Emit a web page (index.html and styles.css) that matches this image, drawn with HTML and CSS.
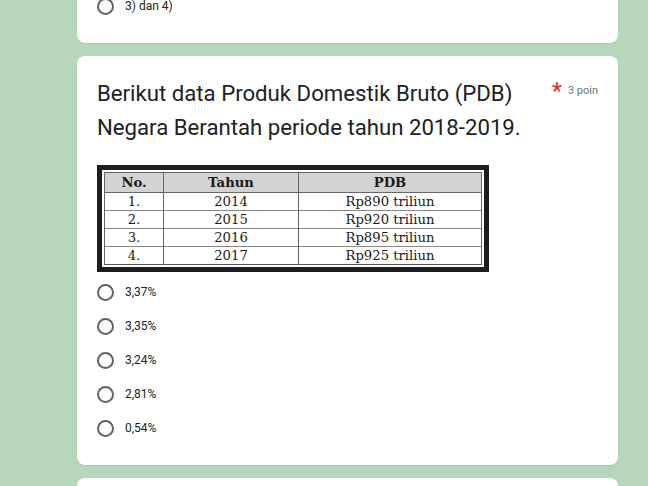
FILE: index.html
```html
<!DOCTYPE html>
<html lang="id">
<head>
<meta charset="utf-8">
<title>Form</title>
<link rel="stylesheet" href="styles.css">
</head>
<body>
<main class="form">
  <section class="card">
    <div class="option"><span class="radio"></span><span class="label">3) dan 4)</span></div>
  </section>
  <section class="card">
    <div class="q-head">
      <h2 class="q-title">Berikut data Produk Domestik Bruto (PDB) Negara Berantah periode tahun 2018-2019.</h2>
      <div class="points"><span class="req">*</span><span class="poin">3 poin</span></div>
    </div>
    <div class="figure">
      <table class="data">
        <thead>
          <tr><th class="c1">No.</th><th class="c2">Tahun</th><th class="c3">PDB</th></tr>
        </thead>
        <tbody>
          <tr><td>1.</td><td>2014</td><td>Rp890 triliun</td></tr>
          <tr><td>2.</td><td>2015</td><td>Rp920 triliun</td></tr>
          <tr><td>3.</td><td>2016</td><td>Rp895 triliun</td></tr>
          <tr><td>4.</td><td>2017</td><td>Rp925 triliun</td></tr>
        </tbody>
      </table>
    </div>
    <div class="options">
      <div class="option"><span class="radio"></span><span class="label">3,37%</span></div>
      <div class="option"><span class="radio"></span><span class="label">3,35%</span></div>
      <div class="option"><span class="radio"></span><span class="label">3,24%</span></div>
      <div class="option"><span class="radio"></span><span class="label">2,81%</span></div>
      <div class="option"><span class="radio"></span><span class="label">0,54%</span></div>
    </div>
  </section>
  <section class="card card-next"></section>
</main>
</body>
</html>
```

FILE: styles.css
```css
html, body {
  margin: 0;
  padding: 0;
  background: #b6d7bb;
  font-family: Roboto, "Noto Sans", Arial, sans-serif;
  color: #202124;
  overflow: hidden;
}

.form {
  width: 541px;
  margin: -31px 0 0 77px;
  display: flex;
  flex-direction: column;
  gap: 13px;
}

.card {
  background: #fff;
  border-radius: 8px;
  padding: 20px;
  box-shadow: 0 1px 1px rgba(0,0,0,0.08);
}

.card-next {
  height: 60px;
}

.q-head {
  display: flex;
  align-items: flex-start;
  justify-content: space-between;
}

.q-title {
  margin: 0;
  font-weight: 400;
  font-size: 22.2px;
  line-height: 34px;
  width: 445px;
}

.points {
  display: flex;
  align-items: center;
  gap: 6px;
  padding-top: 6px;
}

.req {
  color: #d93025;
  font-size: 23px;
  line-height: 20px;
  height: 16px;
}

.poin {
  color: #70757a;
  font-size: 11px;
}

.figure {
  margin-top: 21px;
  width: 378px;
  background: #fff;
  border: 5px solid #1e1e1e;
  padding: 2px;
}

.data {
  width: 378px;
  border-collapse: collapse;
  font-family: "DejaVu Serif", "Liberation Serif", serif;
  font-size: 13.2px;
  color: #1a1a1a;
  border: 1px solid #555;
  table-layout: fixed;
}

.data th {
  background: #d3d3d3;
  font-weight: 700;
  height: 19px;
  padding: 0;
  border: 1px solid #666;
}

.data td {
  text-align: center;
  height: 17px;
  padding: 0;
  line-height: 17px;
  border-left: 1px solid #666;
  border-right: 1px solid #666;
  border-top: 1px solid #888;
}

.c1 { width: 58px; }
.c2 { width: 134px; }

.options {
  margin-top: 3px;
}

.option {
  display: flex;
  align-items: center;
  height: 34px;
}

.radio {
  box-sizing: border-box;
  width: 17px;
  height: 17px;
  border: 2px solid #5f6368;
  border-radius: 50%;
  flex: none;
}

.label {
  margin-left: 11px;
  font-size: 12px;
  color: #202124;
}
```
